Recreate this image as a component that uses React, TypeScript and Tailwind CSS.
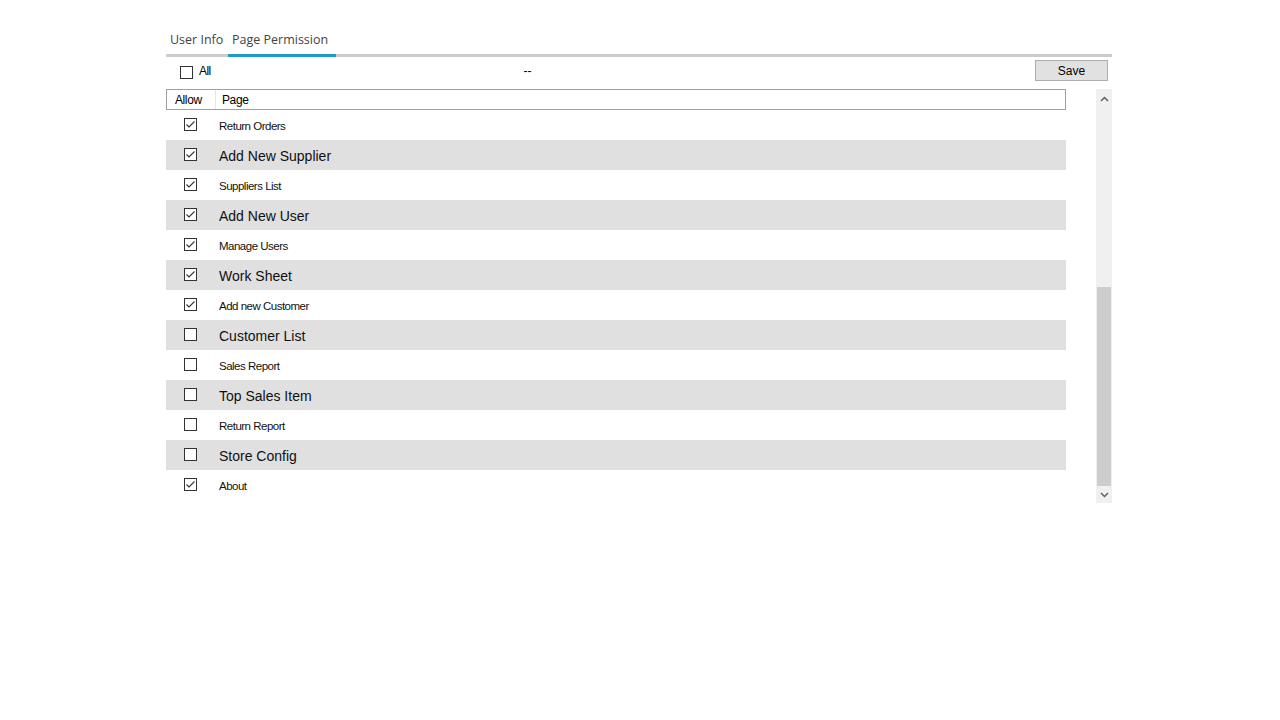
import React from 'react';

type Row = { name: string; allowed: boolean };

const rows: Row[] = [
  { name: 'Return Orders', allowed: true },
  { name: 'Add New Supplier', allowed: true },
  { name: 'Suppliers List', allowed: true },
  { name: 'Add New User', allowed: true },
  { name: 'Manage Users', allowed: true },
  { name: 'Work Sheet', allowed: true },
  { name: 'Add new Customer', allowed: true },
  { name: 'Customer List', allowed: false },
  { name: 'Sales Report', allowed: false },
  { name: 'Top Sales Item', allowed: false },
  { name: 'Return Report', allowed: false },
  { name: 'Store Config', allowed: false },
  { name: 'About', allowed: true },
];

const CheckBox: React.FC<{ checked: boolean }> = ({ checked }) => (
  <div className="w-[13px] h-[13px] border border-[#333333] bg-white flex items-center justify-center">
    {checked && (
      <svg width="11" height="11" viewBox="0 0 11 11" fill="none">
        <path d="M1.5 5.5 L4 8 L9.5 2.5" stroke="#333333" strokeWidth="1.1" />
      </svg>
    )}
  </div>
);

export default function App() {
  return (
    <div className="w-[1280px] h-[720px] bg-white font-['Liberation_Sans',Arial,sans-serif] text-black">
      <div className="ml-[166px] w-[946px] pt-[28px]">
        {/* Tabs */}
        <div className="flex h-[29px] border-b-[3px] border-[#cccccc] font-['Open_Sans',sans-serif] text-[12.5px] text-[#444] whitespace-nowrap">
          <div className="pl-[4px] w-[62px] leading-[24px]">User Info</div>
          <div className="w-[108px] pl-[4px] leading-[24px] -mb-[3px] border-b-[3px] border-[#1f9bc8]">Page Permission</div>
        </div>

        {/* Toolbar */}
        <div className="h-[32px] flex items-start">
          <div className="ml-[14px] mt-[7px] flex items-center gap-[6px] text-[12px] tracking-[-0.6px]">
            <CheckBox checked={false} />
            <span className="-mt-[2px]">All</span>
          </div>
          <div className="ml-[313px] mt-[5px] text-[12px]">--</div>
          <button className="ml-auto mr-[4px] mt-[3px] w-[73px] h-[21px] bg-[#e1e1e1] border border-[#adadad] text-[12px] leading-none">
            Save
          </button>
        </div>

        {/* Grid */}
        <div className="flex h-[414px]">
          <div className="w-[900px]">
            <div className="flex h-[21px] border border-[#a0a0a0] text-[12px] tracking-[-0.4px] items-stretch">
              <div className="w-[49px] border-r border-[#e5e5e5] pl-[8px] leading-[20px]">Allow</div>
              <div className="pl-[6px] leading-[20px]">Page</div>
            </div>
            {rows.map((r, i) => {
              const alt = i % 2 === 1;
              return (
                <div
                  key={r.name}
                  className={`flex items-center h-[30px] ${alt ? 'bg-[#e0e0e0]' : 'bg-white'}`}
                >
                  <div className="w-[53px] pl-[18px] -mt-[2px]">
                    <CheckBox checked={r.allowed} />
                  </div>
                  <span
                    className={
                      alt
                        ? 'mt-[3px] text-[14px] text-[#111]'
                        : 'mt-[4px] text-[11.5px] tracking-[-0.5px] text-[#111]'
                    }
                  >
                    {r.name}
                  </span>
                </div>
              );
            })}
          </div>

          {/* Scrollbar */}
          <div className="ml-[30px] w-[16px] bg-[#f0f0f0] flex flex-col">
            <div className="h-[19px] flex items-center justify-center">
              <svg width="9" height="6" viewBox="0 0 9 6">
                <path d="M1 5 L4.5 1.5 L8 5" stroke="#606060" strokeWidth="1.5" fill="none" />
              </svg>
            </div>
            <div className="flex-1 flex flex-col">
              <div className="h-[179px]" />
              <div className="flex-1 bg-[#cdcdcd] mx-[1px]" />
            </div>
            <div className="h-[17px] flex items-center justify-center">
              <svg width="9" height="6" viewBox="0 0 9 6">
                <path d="M1 1 L4.5 4.5 L8 1" stroke="#606060" strokeWidth="1.5" fill="none" />
              </svg>
            </div>
          </div>
        </div>
      </div>
    </div>
  );
}
